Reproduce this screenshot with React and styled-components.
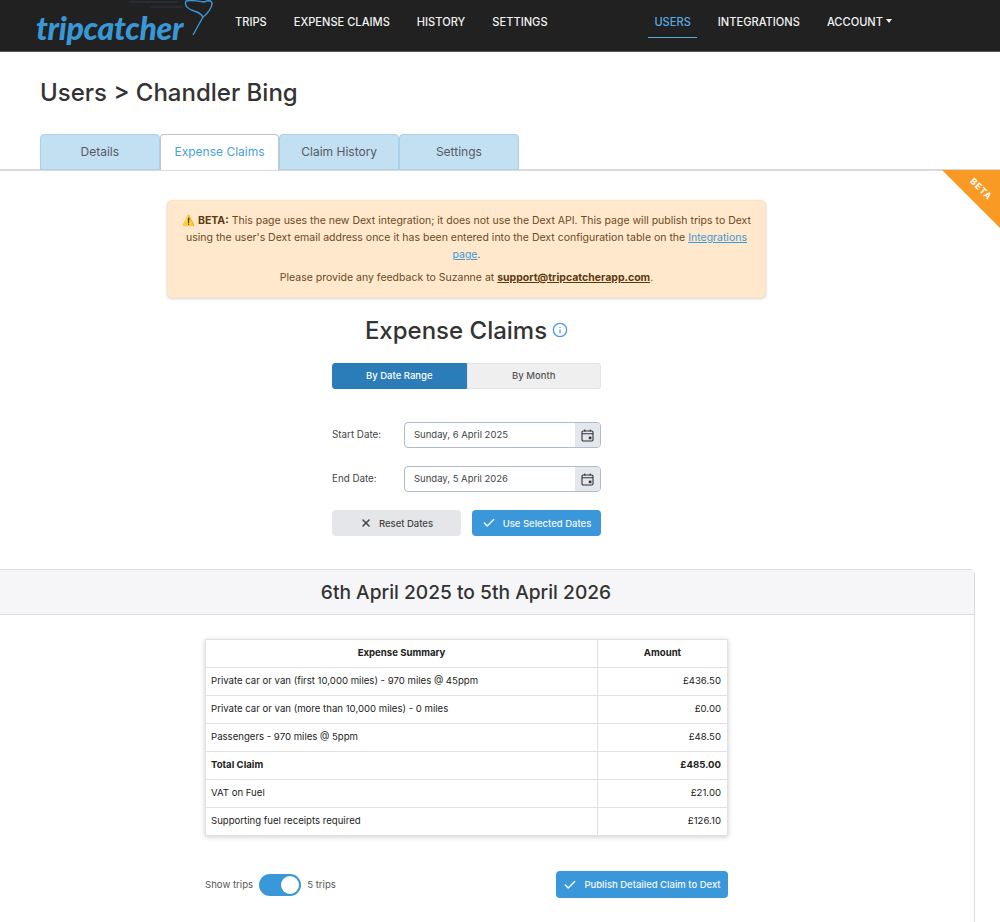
import React from "react";
import styled, { createGlobalStyle } from "styled-components";
import { Check, X, Info } from "lucide-react";

const GlobalStyle = createGlobalStyle`
  html, body {
    margin: 0;
    height: 922px;
    overflow: hidden;
    background: #fff;
    font-family: Inter, "Liberation Sans", sans-serif;
    color: #343a40;
  }
`;

const NavBar = styled.nav`
  display: flex;
  align-items: center;
  height: 51px;
  background: #212121;
  border-bottom: 1px solid #555;
  padding-left: 36px;
`;

const Logo = styled.div`
  position: relative;
  width: 193px;
  height: 51px;
  flex: none;
`;

const LogoText = styled.span`
  display: block;
  font-family: Lato, sans-serif;
  font-weight: 900;
  font-style: italic;
  font-size: 32px;
  line-height: 56px;
  letter-spacing: -0.3px;
  color: #3a97d6;
`;

const LogoNet = styled.svg`
  position: absolute;
  left: 92px;
  top: 0;
`;

const NavGroup = styled.div`
  display: flex;
  gap: 15px;
  margin-bottom: 8px;
  margin-left: ${(p) => (p.$right ? "auto" : "0")};
  padding-right: ${(p) => (p.$right ? "102px" : "0")};
`;

const NavLink = styled.a`
  display: flex;
  align-items: center;
  box-sizing: border-box;
  height: 33px;
  padding: 2px 6px 0;
  font-size: 11.1px;
  font-weight: 500;
  color: ${(p) => (p.$active ? "#5aa9e0" : "#f2f2f2")};
  border-bottom: 1px solid ${(p) => (p.$active ? "#5aa9e0" : "transparent")};
`;

const Caret = styled.span`
  width: 0;
  height: 0;
  margin-left: 3px;
  margin-bottom: 2px;
  border-top: 4px solid #f2f2f2;
  border-left: 3.5px solid transparent;
  border-right: 3.5px solid transparent;
`;

const PageTitle = styled.h1`
  margin: 0;
  padding: 26px 0 0 40px;
  height: 56px;
  font-size: 24px;
  line-height: 30px;
  font-weight: 500;
  color: #333;
`;

const TabBar = styled.div`
  display: flex;
  height: 35px;
  padding-left: 40px;
  border-bottom: 2px solid #d9d9de;
`;

const Tab = styled.div`
  width: 119.7px;
  height: 36px;
  box-sizing: border-box;
  padding-bottom: 2px;
  display: flex;
  align-items: center;
  justify-content: center;
  font-size: 12px;
  border-radius: 4px 4px 0 0;
  color: ${(p) => (p.$active ? "#4a9fdc" : "#555b61")};
  background: ${(p) => (p.$active ? "#fff" : "#c3dff2")};
  border: 1px solid ${(p) => (p.$active ? "#c4c4c8" : "#a9d0ec")};
  border-bottom: ${(p) => (p.$active ? "none" : "1px solid #a9d0ec")};
`;

const Ribbon = styled.div`
  position: absolute;
  top: 170px;
  right: 0;
  width: 58px;
  height: 58px;
  background: #f99a24;
  clip-path: polygon(0 0, 100% 0, 100% 100%);
`;

const RibbonText = styled.span`
  position: absolute;
  top: 14px;
  right: -1px;
  width: 40px;
  text-align: center;
  font-size: 9px;
  line-height: 10px;
  font-weight: 700;
  letter-spacing: 0.8px;
  color: #fff;
  transform: rotate(45deg);
`;

const Main = styled.main`
  width: 933px;
  display: flex;
  flex-direction: column;
  align-items: center;
  padding-top: 29px;
`;

const Alert = styled.div`
  width: 599px;
  height: 98px;
  box-sizing: border-box;
  padding: 11px 14px 0;
  background: #ffe8cc;
  border-radius: 5px;
  border: 1px solid #fde3c4;
  box-shadow: 0 1px 3px rgba(0, 0, 0, 0.18);
  color: #6b4a1f;
  font-size: 10.5px;
  line-height: 17px;
  text-align: center;
`;

const AlertLine = styled.p`
  margin: 0 0 6px;
`;

const AlertStrong = styled.strong`
  font-weight: 700;
  color: #5c3a10;
`;

const AlertMail = styled.a`
  font-weight: 700;
  color: #5c3a10;
  text-decoration: underline;
`;

const AlertLink = styled.a`
  color: #3f97d8;
  text-decoration: underline;
`;

const Heading = styled.div`
  display: flex;
  align-items: center;
  gap: 5px;
  margin-top: 17px;
  height: 30px;
  font-size: 24px;
  font-weight: 500;
  color: #333;
`;

const InfoIcon = styled(Info)`
  color: #4c9be8;
`;

const Segments = styled.div`
  display: flex;
  width: 269px;
  margin-top: 18px;
`;

const Segment = styled.div`
  flex: 1;
  height: 26px;
  box-sizing: border-box;
  padding-bottom: 2px;
  display: flex;
  align-items: center;
  justify-content: center;
  font-size: 9.5px;
  font-weight: 500;
  color: ${(p) => (p.$active ? "#fff" : "#555")};
  background: ${(p) => (p.$active ? "#2a7db9" : "#efeff0")};
  border: 1px solid ${(p) => (p.$active ? "#2a7db9" : "#e3e3e5")};
  border-radius: ${(p) => (p.$active ? "3px 0 0 3px" : "0 3px 3px 0")};
`;

const DateRow = styled.div`
  display: flex;
  align-items: center;
  width: 269px;
  height: 26px;
  margin-top: ${(p) => (p.$first ? "33px" : "18px")};
`;

const DateLabel = styled.label`
  width: 72px;
  padding-bottom: 1px;
  font-size: 9.8px;
  color: #444;
`;

const DateField = styled.div`
  flex: 1;
  display: flex;
  height: 26px;
  box-sizing: border-box;
  border: 1px solid #aebccb;
  border-radius: 4px;
  overflow: hidden;
`;

const DateValue = styled.div`
  flex: 1;
  display: flex;
  align-items: center;
  padding: 0 0 1px 9px;
  font-size: 9.5px;
  color: #444;
`;

const DateAddon = styled.div`
  width: 25px;
  display: flex;
  align-items: center;
  justify-content: center;
  background: #e4e7ec;
  color: #333;
`;

const ButtonRow = styled.div`
  display: flex;
  justify-content: space-between;
  width: 269px;
  margin-top: 18px;
`;

const Button = styled.button`
  display: flex;
  align-items: center;
  justify-content: center;
  gap: 7px;
  width: ${(p) => (p.$width ? `${p.$width}px` : "129px")};
  height: ${(p) => (p.$height ? `${p.$height}px` : "26px")};
  padding: 0;
  border: none;
  border-radius: 4px;
  font-family: inherit;
  font-size: 9.5px;
  font-weight: 500;
  color: ${(p) => (p.$primary ? "#f4f9fd" : "#444")};
  background: ${(p) => (p.$primary ? "#3a97d9" : "#e4e6ea")};
`;

const Card = styled.section`
  align-self: flex-start;
  box-sizing: border-box;
  width: 1018px;
  margin: 33px 0 0 -43px;
  border: 1px solid #dcdce0;
  border-radius: 5px 5px 0 0;
`;

const CardHeader = styled.div`
  height: 44px;
  box-sizing: content-box;
  display: flex;
  align-items: center;
  justify-content: center;
  background: #f6f6f8;
  border-bottom: 1px solid #dcdce0;
  font-size: 19.2px;
  font-weight: 500;
  color: #333;
`;

const CardBody = styled.div`
  padding: 24px 246px 40px 247px;
`;

const Table = styled.table`
  width: 523px;
  border-collapse: collapse;
  table-layout: fixed;
  box-shadow: 0 1px 5px rgba(0, 0, 0, 0.2);
  font-size: 9.6px;
  color: #222;
`;

const Th = styled.th`
  height: 28px;
  padding: 0 6px 2px;
  box-sizing: border-box;
  font-weight: 700;
  text-align: center;
  border: 1px solid #e2e2e6;
`;

const Td = styled.td`
  height: 28px;
  padding: 0 6px 2px 5px;
  box-sizing: border-box;
  font-weight: ${(p) => (p.$bold ? 700 : 400)};
  text-align: ${(p) => (p.$num ? "right" : "left")};
  border: 1px solid #e2e2e6;
`;

const Footer = styled.div`
  display: flex;
  align-items: center;
  justify-content: space-between;
  width: 523px;
  margin-top: 35px;
`;

const ShowTrips = styled.div`
  display: flex;
  align-items: center;
  gap: 6px;
  font-size: 9.6px;
  color: #555;
`;

const Switch = styled.div`
  display: flex;
  justify-content: flex-end;
  align-items: center;
  width: 42px;
  height: 22px;
  box-sizing: border-box;
  padding-right: 2px;
  background: #3a97d9;
  border-radius: 11px;
`;

const SwitchKnob = styled.div`
  width: 18px;
  height: 18px;
  border-radius: 50%;
  background: #fff;
`;

const LogoMark = () => (
  <LogoNet width="90" height="40" viewBox="0 0 90 40" fill="none">
    <path d="M1 2 H50 M22 7 H55" stroke="#2b3a44" strokeWidth="1" />
    <path
      d="M58 1 C56 6 60 9 66 11 C70 12 73 14 75 17 C79 14 84 8 84 4 C84 0 80 0 76 2 C70 1 62 0 58 1 Z"
      stroke="#3a97d6"
      strokeWidth="1.4"
    />
    <path d="M65 35 L75 17" stroke="#3a97d6" strokeWidth="1.4" />
  </LogoNet>
);

const CalendarIcon = () => (
  <svg width="13" height="13" viewBox="0 0 13 13" fill="none">
    <rect x="1" y="2" width="11" height="10" rx="1.2" stroke="currentColor" strokeWidth="1.1" />
    <path d="M1 4.8 H12" stroke="currentColor" strokeWidth="1.1" />
    <path d="M3.7 0.6 V2.6 M9.3 0.6 V2.6" stroke="currentColor" strokeWidth="1.1" />
    <rect x="7.8" y="7.6" width="2.6" height="2.6" fill="currentColor" />
  </svg>
);

const rows = [
  ["Private car or van (first 10,000 miles) - 970 miles @ 45ppm", "£436.50"],
  ["Private car or van (more than 10,000 miles) - 0 miles", "£0.00"],
  ["Passengers - 970 miles @ 5ppm", "£48.50"],
  ["Total Claim", "£485.00", true],
  ["VAT on Fuel", "£21.00"],
  ["Supporting fuel receipts required", "£126.10"],
];

export default function App() {
  return (
    <>
      <GlobalStyle />
      <NavBar>
        <Logo>
          <LogoText>tripcatcher</LogoText>
          <LogoMark />
        </Logo>
        <NavGroup>
          <NavLink>TRIPS</NavLink>
          <NavLink>EXPENSE CLAIMS</NavLink>
          <NavLink>HISTORY</NavLink>
          <NavLink>SETTINGS</NavLink>
        </NavGroup>
        <NavGroup $right>
          <NavLink $active>USERS</NavLink>
          <NavLink>INTEGRATIONS</NavLink>
          <NavLink>
            ACCOUNT
            <Caret />
          </NavLink>
        </NavGroup>
      </NavBar>
      <PageTitle>Users &gt; Chandler Bing</PageTitle>
      <TabBar>
        <Tab>Details</Tab>
        <Tab $active>Expense Claims</Tab>
        <Tab>Claim History</Tab>
        <Tab>Settings</Tab>
      </TabBar>
      <Ribbon>
        <RibbonText>BETA</RibbonText>
      </Ribbon>
      <Main>
        <Alert>
          <AlertLine>
            ⚠️ <AlertStrong>BETA:</AlertStrong> This page uses the new Dext integration; it does not use the Dext API. This page will publish trips to Dext using the user's Dext email address once it has been entered into the Dext configuration table on the{" "}
            <AlertLink>Integrations page</AlertLink>.
          </AlertLine>
          <AlertLine>
            Please provide any feedback to Suzanne at{" "}
            <AlertMail>support@tripcatcherapp.com</AlertMail>.
          </AlertLine>
        </Alert>
        <Heading>
          Expense Claims
          <InfoIcon size={16} />
        </Heading>
        <Segments>
          <Segment $active>By Date Range</Segment>
          <Segment>By Month</Segment>
        </Segments>
        <DateRow $first>
          <DateLabel>Start Date:</DateLabel>
          <DateField>
            <DateValue>Sunday, 6 April 2025</DateValue>
            <DateAddon>
              <CalendarIcon />
            </DateAddon>
          </DateField>
        </DateRow>
        <DateRow>
          <DateLabel>End Date:</DateLabel>
          <DateField>
            <DateValue>Sunday, 5 April 2026</DateValue>
            <DateAddon>
              <CalendarIcon />
            </DateAddon>
          </DateField>
        </DateRow>
        <ButtonRow>
          <Button>
            <X size={12} strokeWidth={3} />
            Reset Dates
          </Button>
          <Button $primary>
            <Check size={14} strokeWidth={2.5} />
            Use Selected Dates
          </Button>
        </ButtonRow>
        <Card>
          <CardHeader>6th April 2025 to 5th April 2026</CardHeader>
          <CardBody>
            <Table>
              <colgroup>
                <col style={{ width: 392 }} />
                <col />
              </colgroup>
              <thead>
                <tr>
                  <Th>Expense Summary</Th>
                  <Th>Amount</Th>
                </tr>
              </thead>
              <tbody>
                {rows.map(([label, amount, bold]) => (
                  <tr key={label}>
                    <Td $bold={bold}>{label}</Td>
                    <Td $num $bold={bold}>
                      {amount}
                    </Td>
                  </tr>
                ))}
              </tbody>
            </Table>
            <Footer>
              <ShowTrips>
                Show trips
                <Switch>
                  <SwitchKnob />
                </Switch>
                5 trips
              </ShowTrips>
              <Button $primary $width={172} $height={27}>
                <Check size={14} strokeWidth={2.5} />
                Publish Detailed Claim to Dext
              </Button>
            </Footer>
          </CardBody>
        </Card>
      </Main>
    </>
  );
}
